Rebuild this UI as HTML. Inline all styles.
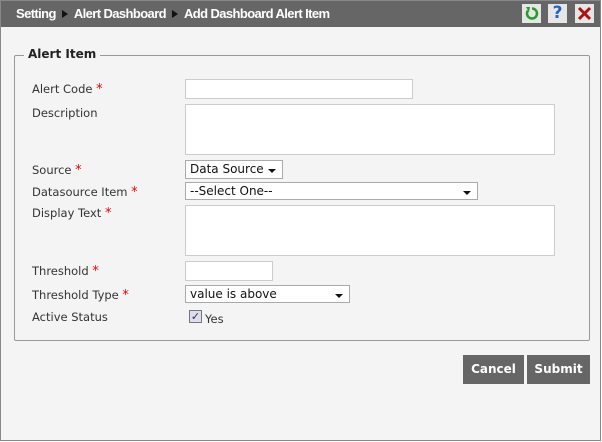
<!DOCTYPE html>
<html><head><style>
*{margin:0;padding:0;box-sizing:border-box}
body{width:602px;height:442px;background:#fff;font-family:"DejaVu Sans","Liberation Sans",sans-serif;font-size:12px;color:#333;position:relative;overflow:hidden}
#outer{position:absolute;left:0;top:0;width:601px;height:441px;border:1px solid #888;background:#f4f4f4}
#hdr{position:absolute;left:1px;top:1px;width:599px;height:26px;background:#666;color:#fff;font-weight:bold;font-family:"Liberation Sans",sans-serif;font-size:13px;letter-spacing:-0.6px;line-height:26px;padding-left:15px}
.tri{display:inline-block;width:0;height:0;border-left:6px solid #111;border-top:4px solid transparent;border-bottom:4px solid transparent;margin:0 6px 0 6px}
.ib{position:absolute;top:4px;width:19px;height:19px;background:#e6e6e6;font-weight:bold;text-align:center;line-height:19px}
#fs{position:absolute;left:14px;top:55px;width:576px;height:286px;border:1px solid #999;border-radius:2px}
#leg{position:absolute;left:24px;top:47px;background:#f4f4f4;padding:0 4px;font-weight:bold;color:#222;font-size:12px}
.l{position:absolute;left:32px;font-size:11.5px}
.r{color:#e00;font-size:13px}
.in{position:absolute;background:#fff;border:1px solid #ccc}
.sel{position:absolute;background:#fff;border:1px solid #aaa;font-size:12px;padding-left:4px;line-height:17px;color:#111}
.sel:after{content:"";position:absolute;right:6px;top:8px;border-top:4px solid #111;border-left:4px solid transparent;border-right:4px solid transparent}
.btn{position:absolute;top:355px;height:29px;background:#666;color:#fff;font-weight:bold;font-size:12px;line-height:29px;text-align:center}
</style></head><body>
<div id="outer"></div>
<div id="hdr">Setting<span class="tri"></span>Alert Dashboard<span class="tri"></span>Add Dashboard Alert Item</div>
<div class="ib" style="left:522px"><svg width="19" height="19" viewBox="0 0 19 19"><path d="M6 6.5A5 5 0 1 0 10 4.5" fill="none" stroke="#2a9a2a" stroke-width="2.5"/><path d="M4 3l4 0l-1 5z" fill="#2a9a2a"/></svg></div>
<div class="ib" style="left:548px;color:#1e64c8;font-size:17px">?</div>
<div class="ib" style="left:575px"><svg width="19" height="19" viewBox="0 0 19 19"><path d="M4 4L15 15M15 4L4 15" stroke="#b01010" stroke-width="3"/></svg></div>
<div id="fs"></div>
<div id="leg">Alert Item</div>
<div class="l" style="top:82px">Alert Code <span class="r">*</span></div>
<div class="in" style="left:185px;top:79px;width:228px;height:20px"></div>
<div class="l" style="top:106px">Description</div>
<div class="in" style="left:185px;top:104px;width:370px;height:51px"></div>
<div class="l" style="top:163px">Source <span class="r">*</span></div>
<div class="sel" style="left:185px;top:160px;width:98px;height:19px">Data Source</div>
<div class="l" style="top:185px">Datasource Item <span class="r">*</span></div>
<div class="sel" style="left:185px;top:182px;width:293px;height:18px">--Select One--</div>
<div class="l" style="top:206px">Display Text <span class="r">*</span></div>
<div class="in" style="left:185px;top:205px;width:370px;height:51px"></div>
<div class="l" style="top:264px">Threshold <span class="r">*</span></div>
<div class="in" style="left:185px;top:261px;width:88px;height:20px"></div>
<div class="l" style="top:288px">Threshold Type <span class="r">*</span></div>
<div class="sel" style="left:185px;top:285px;width:165px;height:18px">value is above</div>
<div class="l" style="top:310px">Active Status</div>
<div style="position:absolute;left:189px;top:310px;width:13px;height:13px;border:1px solid #777;background:#dde;color:#335;font-size:11px;line-height:11px;text-align:center">✓</div>
<div style="position:absolute;left:205px;top:312px;font-size:11.5px">Yes</div>
<div class="btn" style="left:463px;width:61px">Cancel</div>
<div class="btn" style="left:527px;width:63px">Submit</div>
</body></html>
